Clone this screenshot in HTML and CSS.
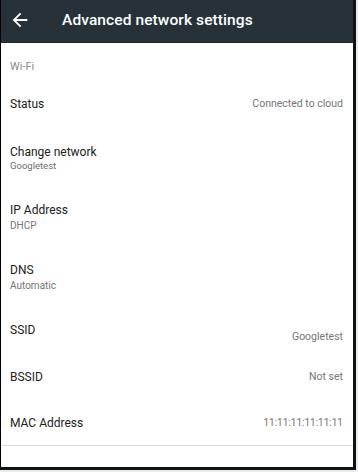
FILE: index.html
```html
<!DOCTYPE html>
<html>
<head>
<meta charset="utf-8">
<link rel="stylesheet" href="styles.css">
</head>
<body>
<div class="frame">
  <header class="appbar">
    <svg class="back" viewBox="0 0 24 24" width="22" height="22"><path fill="#fff" d="M20 11H7.83l5.59-5.59L12 4l-8 8 8 8 1.41-1.41L7.83 13H20v-2z"/></svg>
    <h1 class="title">Advanced network settings</h1>
  </header>
  <main class="list">
    <div class="subheader">Wi-Fi</div>
    <div class="row row--single">
      <div class="label">Status</div>
      <div class="value">Connected to cloud</div>
    </div>
    <div class="row row--double row--first-double">
      <div class="text">
        <div class="label">Change network</div>
        <div class="sub sub--small">Googletest</div>
      </div>
    </div>
    <div class="row row--double">
      <div class="text">
        <div class="label">IP Address</div>
        <div class="sub">DHCP</div>
      </div>
    </div>
    <div class="row row--double">
      <div class="text">
        <div class="label">DNS</div>
        <div class="sub">Automatic</div>
      </div>
    </div>
    <div class="row row--top">
      <div class="label">SSID</div>
      <div class="value value--low">Googletest</div>
    </div>
    <div class="row row--single">
      <div class="label">BSSID</div>
      <div class="value">Not set</div>
    </div>
    <div class="row row--single row--last">
      <div class="label">MAC Address</div>
      <div class="value value--mono">11:11:11:11:11:11</div>
    </div>
  </main>
</div>
</body>
</html>
```

FILE: styles.css
```css
html, body {
  margin: 0;
  padding: 0;
}
body {
  background: #e9eaee;
  font-family: Roboto, "Liberation Sans", sans-serif;
  width: 358px;
  height: 472px;
  overflow: hidden;
}
.frame {
  width: 352px;
  height: 467px;
  border-left: 1px solid #000;
  border-right: 3px solid #111;
  border-bottom: 3px solid #111;
  background: #fff;
  display: flex;
  flex-direction: column;
}
.appbar {
  background: #263238;
  border-bottom: 1px solid #1d272b;
  display: flex;
  align-items: center;
  padding-left: 8px;
  padding-bottom: 3px;
  box-sizing: border-box;
  height: 43px;
}
.back {
  display: block;
  flex: none;
}
.title {
  margin: 0 0 0 31px;
  font-size: 15.5px;
  font-weight: 500;
  color: #fff;
  letter-spacing: 0.1px;
}
.list {
  display: flex;
  flex-direction: column;
  border-bottom: 1px solid #dcdcdc;
}
.subheader {
  height: 38px;
  box-sizing: border-box;
  padding: 17px 0 0 9px;
  font-size: 11px;
  line-height: 14px;
  color: #8a8a8a;
}
.row {
  display: flex;
  align-items: center;
  justify-content: space-between;
  padding: 0 10px 0 9px;
  box-sizing: border-box;
}
.row--single {
  height: 46px;
}
.row--double {
  height: 60px;
}
.row--first-double {
  height: 61px;
}
.row--top {
  height: 46px;
  align-items: flex-start;
  padding-top: 14px;
}
.row--last {
  height: 45px;
}
.label {
  font-size: 12px;
  line-height: 16px;
  color: #212121;
}
.sub {
  font-size: 10px;
  line-height: 16px;
  color: #757575;
}
.sub--small {
  font-size: 9.5px;
  line-height: 12px;
  color: #6d6d6d;
}
.value {
  font-size: 10.5px;
  line-height: 14px;
  color: #757575;
}
.value--mono {
  font-size: 10px;
}
.value--low {
  margin-top: 8px;
}
```
